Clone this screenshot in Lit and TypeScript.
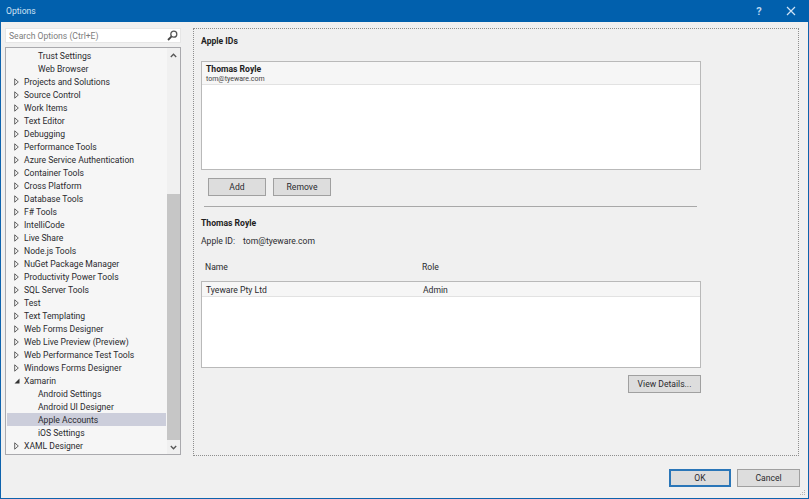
import { LitElement, html, css, svg } from "lit";
import { customElement } from "lit/decorators.js";

type Row = { t: string; lvl: 0 | 1; exp?: boolean; sel?: boolean };
const top: Row[] = [
  { t: "Trust Settings", lvl: 1 },
  { t: "Web Browser", lvl: 1 },
];
const names = ["Projects and Solutions","Source Control","Work Items","Text Editor","Debugging","Performance Tools","Azure Service Authentication","Container Tools","Cross Platform","Database Tools","F# Tools","IntelliCode","Live Share","Node.js Tools","NuGet Package Manager","Productivity Power Tools","SQL Server Tools","Test","Text Templating","Web Forms Designer","Web Live Preview (Preview)","Web Performance Test Tools","Windows Forms Designer"];
const rows: Row[] = [
  ...top,
  ...names.map((t) => ({ t, lvl: 0 as const })),
  { t: "Xamarin", lvl: 0, exp: true },
  { t: "Android Settings", lvl: 1 },
  { t: "Android UI Designer", lvl: 1 },
  { t: "Apple Accounts", lvl: 1, sel: true },
  { t: "iOS Settings", lvl: 1 },
  { t: "XAML Designer", lvl: 0 },
];

@customElement("app-root")
export class AppRoot extends LitElement {
  static styles = css`
    :host { display: block; width: 809px; height: 499px; font-family: Roboto, "Open Sans", sans-serif; font-size: 8.6px; color: #2a2a2e; background: #f0f0f0; }
    * { box-sizing: border-box; }
    .win { width: 809px; height: 499px; display: flex; flex-direction: column; border: solid #0e63ad; border-width: 0 1px 1px 1px; }
    .title { height: 22px; margin: 0 -1px; flex: none; background: #0160ad; color: #cfe3f5; display: flex; align-items: center; padding: 0 13px 0 6px; font-size: 8.6px; }
    .title .name { flex: 1; }
    .title .help { font-size: 11px; font-weight: 700; color: #b9d6f0; margin-right: 23px; width: 8px; text-align: center; }
    .title svg { display: block; }
    .body { flex: 1; display: flex; padding: 6px 8px 0 4px; gap: 12px; min-height: 0; }
    .left { width: 176px; flex: none; display: flex; flex-direction: column; gap: 4px; }
    .search { height: 15px; background: #fff; border: 1px solid #e6e6e6; display: flex; align-items: center; justify-content: space-between; padding: 0 2px 0 3px; color: #7d7d7d; }
    .tree { height: 408px; border: 1px solid #a9a9ad; background: #f6f6f6; display: flex; }
    .rows { flex: 1; padding: 1px 1px 0 1px; min-width: 0; }
    .row { height: 13px; display: flex; align-items: center; line-height: 12px; white-space: nowrap; }
    .row.sel { background: #cccedb; }
    .row .arrow { width: 17px; flex: none; padding-left: 7px; display: flex; align-items: center; }
    .row.l1 { padding-left: 31px; }
    .sb { width: 13px; flex: none; display: flex; flex-direction: column; background: #f0f0f0; }
    .sb .btn { height: 14px; display: flex; align-items: center; justify-content: center; flex: none; }
    .track { flex: 1; display: flex; flex-direction: column; justify-content: flex-end; }
    .thumb { height: 246px; background: #c6c6c6; }
    .panel { width: 606px; height: 428px; border: 1px dotted #8e8e8e; flex: none; padding: 6px 6px 0 7px; display: flex; flex-direction: column; }
    .h { font-weight: 700; color: #1e1e1e; line-height: 13px; }
    .list { width: 500px; border: 1px solid #b9b9b9; background: #fff; }
    .list.a { height: 109px; margin-top: 13px; }
    .list.b { height: 87px; margin-top: 7px; }
    .item { background: #f6f6f6; border-bottom: 1px solid #e2e2e2; }
    .list.a .item { height: 23px; padding: 2px 4px; display: flex; flex-direction: column; }
    .item .nm { font-weight: 700; line-height: 11px; color: #1e1e1e; }
    .item .em { font-size: 7px; line-height: 9px; color: #444; }
    .list.b .item { height: 15px; padding: 1px 4px 0; display: grid; grid-template-columns: 217px 1fr; line-height: 14px; }
    button { font: inherit; color: #2a2a2e; background: #dddddd; border: 1px solid #a0a0a0; padding: 0; height: 18px; display: block; }
    .btns { display: flex; gap: 7px; margin: 8px 0 0 7px; }
    .btns button { width: 58px; }
    .div { height: 1px; background: #a8a8a8; width: 493px; margin: 10px 0 0 3px; }
    .acct { margin-top: 10px; }
    .line { margin-top: 5px; line-height: 13px; display: flex; }
    .line span:first-child { width: 42px; }
    .cols { margin: 13px 0 0 4px; display: grid; grid-template-columns: 217px 1fr; line-height: 13px; }
    .vd { width: 500px; display: flex; justify-content: flex-end; margin-top: 7px; }
    .vd button { width: 73px; }
    .foot { display: flex; justify-content: flex-end; gap: 6px; padding: 14px 8px 0 0; height: 43px; flex: none; position: relative; }
    .foot button { width: 63px; height: 18px; }
    .foot .ok { border: 2px solid #2a76b8; width: 62px; }
    .grip { position: absolute; right: 2px; bottom: 2px; display: block; }
  `;

  private tri(exp?: boolean) {
    return exp
      ? svg`<svg width="6" height="6" viewBox="0 0 6 6"><path d="M5.5 0.5V5.5H0.5Z" fill="#333"/></svg>`
      : svg`<svg width="5" height="8" viewBox="0 0 5 8"><path d="M0.7 0.8L4.3 4L0.7 7.2Z" fill="#f6f6f6" stroke="#555" stroke-width="0.9"/></svg>`;
  }

  render() {
    return html`<div class="win">
      <div class="title">
        <span class="name">Options</span>
        <span class="help">?</span>
        <svg width="10" height="10" viewBox="0 0 10 10"><path d="M1 1L9 9M9 1L1 9" stroke="#cfe3f5" stroke-width="1.2" fill="none"/></svg>
      </div>
      <div class="body">
        <div class="left">
          <div class="search">
            <span>Search Options (Ctrl+E)</span>
            <svg width="11" height="11" viewBox="0 0 11 11"><circle cx="6.8" cy="4.2" r="3" fill="none" stroke="#555" stroke-width="1.3"/><path d="M4.6 6.4L1 10" stroke="#444" stroke-width="1.8"/></svg>
          </div>
          <div class="tree">
            <div class="rows">
              ${rows.map((r) => html`<div class="row ${r.lvl ? "l1" : ""} ${r.sel ? "sel" : ""}">
                ${r.lvl ? "" : html`<span class="arrow">${this.tri(r.exp)}</span>`}<span>${r.t}</span>
              </div>`)}
            </div>
            <div class="sb">
              <div class="btn"><svg width="7" height="5" viewBox="0 0 7 5"><path d="M0.8 4L3.5 1.2L6.2 4" fill="none" stroke="#555" stroke-width="1.3"/></svg></div>
              <div class="track"><div class="thumb"></div></div>
              <div class="btn"><svg width="7" height="5" viewBox="0 0 7 5"><path d="M0.8 1L3.5 3.8L6.2 1" fill="none" stroke="#555" stroke-width="1.3"/></svg></div>
            </div>
          </div>
        </div>
        <div class="panel">
          <div class="h">Apple IDs</div>
          <div class="list a">
            <div class="item"><span class="nm">Thomas Royle</span><span class="em">tom@tyeware.com</span></div>
          </div>
          <div class="btns"><button>Add</button><button>Remove</button></div>
          <div class="div"></div>
          <div class="h acct">Thomas Royle</div>
          <div class="line"><span>Apple ID:</span><span>tom@tyeware.com</span></div>
          <div class="cols"><span>Name</span><span>Role</span></div>
          <div class="list b">
            <div class="item"><span>Tyeware Pty Ltd</span><span>Admin</span></div>
          </div>
          <div class="vd"><button>View Details...</button></div>
        </div>
      </div>
      <div class="foot">
        <button class="ok">OK</button><button>Cancel</button>
        <svg class="grip" width="7" height="7" viewBox="0 0 7 7"><path d="M5 1h1v1H5zM3 3h1v1H3zM5 3h1v1H5zM1 5h1v1H1zM3 5h1v1H3zM5 5h1v1H5z" fill="#b5b5b5"/></svg>
      </div>
    </div>`;
  }
}
